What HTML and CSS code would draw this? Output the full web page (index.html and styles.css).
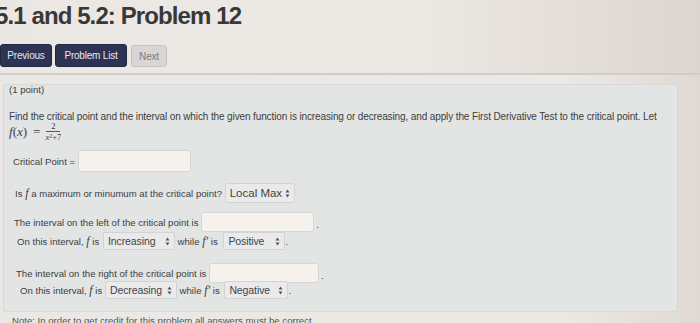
FILE: index.html
```html
<!DOCTYPE html>
<html>
<head>
<meta charset="utf-8">
<link rel="stylesheet" href="styles.css">
</head>
<body>
<div class="top">
  <h1 class="title">5.1 and 5.2: Problem 12</h1>
  <div class="nav">
    <span class="btn dark prev">Previous</span>
    <span class="btn dark list">Problem List</span>
    <span class="btn light">Next</span>
  </div>
</div>
<div class="rule"></div>
<div class="main">
  <div class="problem">
    <div class="pts">(1 point)</div>
    <div class="intro">Find the critical point and the interval on which the given function is increasing or decreasing, and apply the First Derivative Test to the critical point. Let</div>
    <div class="formula">
      <span class="m">f</span><span class="mr">(</span><span class="m">x</span><span class="mr">)</span><span class="eq">=</span>
      <span class="frac"><span class="num">2</span><span class="den"><span class="m">x</span><sup>2</sup>+7</span></span>
    </div>
    <div class="row r1">Critical Point = <span class="input w113"></span></div>
    <div class="row r2">Is <span class="m big">f</span> a maximum or minumum at the critical point? <span class="sel s70">Local Max<svg class="arr" width="5" height="9" viewBox="0 0 5 9"><path d="M2.5 0.5 L4.5 3.5 L0.5 3.5 Z M2.5 8.5 L4.5 5.5 L0.5 5.5 Z" fill="#555"/></svg></span></div>
    <div class="row r3">The interval on the left of the critical point is <span class="input w113"></span> <span class="dot">.</span></div>
    <div class="row r4">On this interval, <span class="m big">f</span> is <span class="sel s72">Increasing<svg class="arr" width="5" height="9" viewBox="0 0 5 9"><path d="M2.5 0.5 L4.5 3.5 L0.5 3.5 Z M2.5 8.5 L4.5 5.5 L0.5 5.5 Z" fill="#555"/></svg></span> while <span class="m big">f&#8242;</span> is <span class="sel s62">Positive<svg class="arr" width="5" height="9" viewBox="0 0 5 9"><path d="M2.5 0.5 L4.5 3.5 L0.5 3.5 Z M2.5 8.5 L4.5 5.5 L0.5 5.5 Z" fill="#555"/></svg></span>.</div>
    <div class="row r5">The interval on the right of the critical point is <span class="input w110"></span> <span class="dot">.</span></div>
    <div class="row r6">On this interval, <span class="m big">f</span> is <span class="sel s72">Decreasing<svg class="arr" width="5" height="9" viewBox="0 0 5 9"><path d="M2.5 0.5 L4.5 3.5 L0.5 3.5 Z M2.5 8.5 L4.5 5.5 L0.5 5.5 Z" fill="#555"/></svg></span> while <span class="m big">f&#8242;</span> is <span class="sel s64">Negative<svg class="arr" width="5" height="9" viewBox="0 0 5 9"><path d="M2.5 0.5 L4.5 3.5 L0.5 3.5 Z M2.5 8.5 L4.5 5.5 L0.5 5.5 Z" fill="#555"/></svg></span>.</div>
  </div>
  <div class="note">Note: In order to get credit for this problem all answers must be correct.</div>
</div>
</body>
</html>
```
FILE: styles.css
```css
html, body {
  margin: 0;
  padding: 0;
}
body {
  width: 700px;
  height: 323px;
  overflow: hidden;
  font-family: "Liberation Sans", Arial, sans-serif;
  color: #3a3a3a;
  background: linear-gradient(90deg, #ebe7e3 0%, #ece8e4 60%, #ddd5cf 100%);
}
.top {
  height: 73px;
  overflow: hidden;
}
.title {
  margin: 0;
  padding-top: 1px;
  margin-left: -5px;
  font-size: 24px;
  line-height: 30px;
  font-weight: bold;
  color: #383838;
  letter-spacing: -0.9px;
}
.nav {
  display: flex;
  gap: 3px;
  margin-top: 13px;
}
.btn {
  display: inline-block;
  height: 23px;
  line-height: 21px;
  font-size: 10px;
  border-radius: 3px;
  box-sizing: border-box;
  text-align: center;
  letter-spacing: -0.2px;
}
.btn.dark {
  background: #2d3355;
  color: #e8e8ee;
  border: 1px solid #23283f;
}
.prev { width: 52px; }
.list { width: 72px; }
.btn.light {
  width: 36px;
  background: #d7d6d4;
  color: #7a7a7a;
  border: 1px solid #c5c4c2;
  height: 22px;
  margin-top: 1px;
  margin-left: 1px;
}
.rule {
  height: 2px;
  background: #cfcdcb;
}
.main {
  background: linear-gradient(90deg, #eae7e4 0%, #ece9e5 80%, #e0d9d3 100%);
  height: 248px;
  padding-top: 9px;
  box-sizing: border-box;
}
.problem {
  margin-left: 3px;
  width: 675px;
  height: 228px;
  box-sizing: border-box;
  background: #e3e5e5;
  border: 1px solid #d7d9d9;
  border-radius: 2px;
  padding: 0 0 0 5px;
  font-size: 9.6px;
  color: #3d3d3d;
}
.pts {
  line-height: 10px;
}
.intro {
  margin-top: 16px;
  line-height: 11px;
  white-space: nowrap;
  letter-spacing: -0.12px;
  font-size: 10px;
}
.formula {
  display: flex;
  align-items: center;
  height: 20px;
  font-family: "Liberation Serif", "Times New Roman", serif;
  font-size: 13px;
}
.m {
  font-family: "Liberation Serif", "Times New Roman", serif;
  font-style: italic;
}
.mr {
  font-family: "Liberation Serif", "Times New Roman", serif;
}
.big {
  font-size: 12px;
}
.eq {
  margin: 0 5px 0 6px;
}
.frac {
  display: inline-flex;
  flex-direction: column;
  align-items: center;
  font-size: 8.5px;
  line-height: 9px;
}
.num {
  border-bottom: 1px solid #555;
  padding: 0 5px;
}
.den sup {
  font-size: 6px;
  vertical-align: 2px;
}
.row {
  display: flex;
  align-items: center;
  white-space: pre;
}
.r1 { margin-top: 8px; margin-left: 4px; height: 22px; }
.r2 { margin-top: 11px; margin-left: 6px; height: 20px; }
.r3 { margin-top: 9px; margin-left: 5px; height: 20px; }
.r4 { margin-top: 0px; margin-left: 8px; height: 18px; }
.r5 { margin-top: 13px; margin-left: 7px; height: 20px; }
.r6 { margin-top: -2px; margin-left: 11px; height: 18px; }
.input {
  display: inline-block;
  height: 22px;
  box-sizing: border-box;
  background: #f6f2ee;
  border: 1px solid #d9d7d4;
  border-radius: 3px;
}
.w113 { width: 113px; }
.w110 { width: 110px; }
.r3 .input, .r5 .input { height: 20px; }
.dot {
  margin-left: 2px;
  align-self: flex-end;
  line-height: 14px;
}
.sel {
  display: inline-flex;
  align-items: center;
  justify-content: space-between;
  height: 18px;
  box-sizing: border-box;
  padding: 0 4px 0 4px;
  background: #eaeaea;
  border: 1px solid #d3d3d3;
  border-radius: 2px;
  font-size: 10.5px;
  color: #444;
  letter-spacing: -0.1px;
}
.r2 .sel { height: 20px; font-size: 11.5px; letter-spacing: 0; }
.s70 { width: 70px; }
.s72 { width: 72px; }
.s62 { width: 62px; }
.s64 { width: 64px; }
.r4 .s72 { margin-left: 1px; }
.r4 .s62 { margin-left: 3px; }
.r6 .s64 { margin-left: 2px; }
.note {
  margin-top: 3px;
  margin-left: 12px;
  font-size: 9.6px;
  color: #555;
}
```
